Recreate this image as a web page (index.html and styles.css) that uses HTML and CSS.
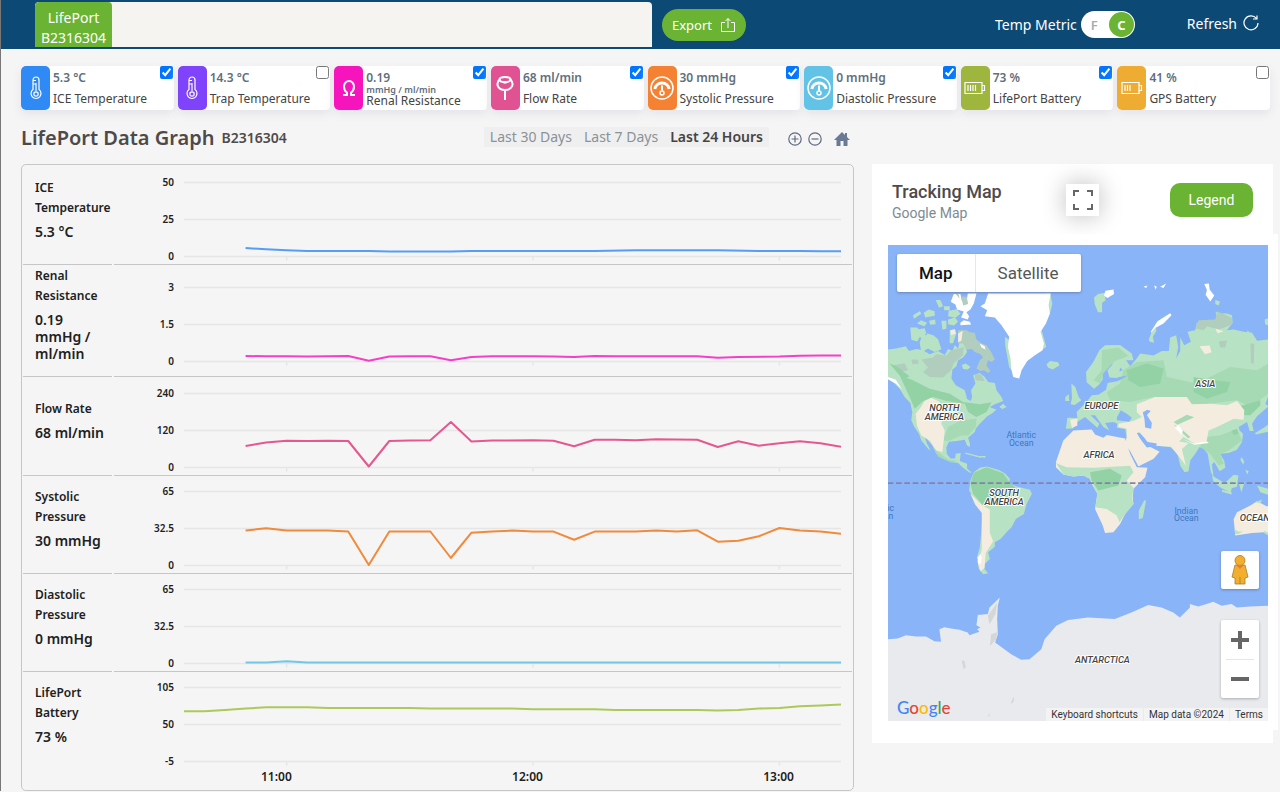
FILE: index.html
```html
<!DOCTYPE html>
<html lang="en">
<head>
<meta charset="utf-8">
<title>LifePort Data Graph</title>
<link rel="stylesheet" href="styles.css">
</head>
<body>
<svg class="defs" width="0" height="0" aria-hidden="true">
  <symbol id="thermo" viewBox="0 0 16 24"><path d="M5 13.500V4a3 3 0 0 1 6 0v9.500a5 5 0 1 1-6 0zM8 7v8M5 4.500h3M5 8h3"/><circle cx="8" cy="18" r="2.200"/></symbol>
  <symbol id="gauge" viewBox="0 0 24 24"><circle cx="12" cy="12" r="11" stroke-width="1.500"/><path d="M4.800 13a7.300 7.300 0 0 1 14.400 0" stroke-width="3"/><path d="M12 9.500v5" stroke-width="2"/><circle cx="12" cy="17" r="2" stroke-width="1.500"/></symbol>
  <symbol id="grid" viewBox="0 0 32 98" preserveAspectRatio="none"><path class="gridline" d="M0 16.500H32M0 53.500H32M0 90.500H32M5 90.500v4M17 90.500v4M29 90.500v4"/></symbol>
</svg>

<header class="topbar">
  <nav class="devices"><a class="device" href="#lifeport">LifePort<br>B2316304</a></nav>
  <button class="export" type="button">Export
    <svg width="16" height="16" viewBox="0 0 16 16" fill="none" stroke="currentColor"><path d="M5 5.500H1.500v9h13v-9H11M8 11V1.500M5.500 4L8 1.500 10.500 4"/></svg>
  </button>
  <div class="metric">
    <span id="metric-label">Temp Metric</span>
    <div class="toggle" role="group" aria-labelledby="metric-label"><button type="button">F</button><button type="button" class="on">C</button></div>
  </div>
  <button class="refresh" type="button">Refresh
    <svg width="16" height="16" viewBox="0 0 16 16" fill="none" stroke="currentColor" stroke-width="1.200"><path d="M13.500 3.500A7 7 0 1 0 15 8M14 .5v3.500h-4"/></svg>
  </button>
</header>

<main class="page">
  <section class="cards" aria-label="Readings">
    <label class="card ice"><span class="badge"><svg width="16" height="24"><use href="#thermo"/></svg></span><span class="info"><b>5.3 °C</b><span>ICE Temperature</span></span><input type="checkbox" checked></label>
    <label class="card trap"><span class="badge"><svg width="16" height="24"><use href="#thermo"/></svg></span><span class="info"><b>14.3 °C</b><span>Trap Temperature</span></span><input type="checkbox"></label>
    <label class="card renal"><span class="badge"><svg width="16" height="18" viewBox="0 0 16 18" class="bold"><path d="M2 16h4v-2.500C3.500 12 3 9.500 3 7.500a5 5.500 0 0 1 10 0c0 2-.5 4.500-3 6V16h4"/></svg></span><span class="info"><b>0.19</b><small>mmHg / ml/min</small><span>Renal Resistance</span></span><input type="checkbox" checked></label>
    <label class="card flow"><span class="badge"><svg width="18" height="26" viewBox="0 0 18 26" class="bold"><path d="M4 4C-1 9 2 15 9 15s10-6 5-11M9 15v10"/><ellipse cx="9" cy="4.500" rx="5.500" ry="2.500"/><path d="M6 7q3 2 6 0" stroke-width="1.500"/></svg></span><span class="info"><b>68 ml/min</b><span>Flow Rate</span></span><input type="checkbox" checked></label>
    <label class="card sys"><span class="badge"><svg width="24" height="24"><use href="#gauge"/></svg></span><span class="info"><b>30 mmHg</b><span>Systolic Pressure</span></span><input type="checkbox" checked></label>
    <label class="card dia"><span class="badge"><svg width="24" height="24"><use href="#gauge"/></svg></span><span class="info"><b>0 mmHg</b><span>Diastolic Pressure</span></span><input type="checkbox" checked></label>
    <label class="card batt"><span class="badge"><svg width="22" height="14" viewBox="0 0 22 14"><path d="M1 1.500h17v11H1zM18 4.500h2.500v5H18M4 4v6M6.500 4v6M9 4v6M11.500 4v6"/></svg></span><span class="info"><b>73 %</b><span>LifePort Battery</span></span><input type="checkbox" checked></label>
    <label class="card gps"><span class="badge"><svg width="22" height="14" viewBox="0 0 22 14"><path d="M1 1.500h17v11H1zM18 4.500h2.500v5H18M4 4v6M6.500 4v6M9 4v6"/></svg></span><span class="info"><b>41 %</b><span>GPS Battery</span></span><input type="checkbox"></label>
  </section>

  <div class="columns">
    <div class="title-row">
      <h1>LifePort Data Graph</h1><h2>B2316304</h2>
      <div class="ranges"><button type="button">Last 30 Days</button><button type="button">Last 7 Days</button><button type="button" class="active">Last 24 Hours</button></div>
      <div class="tools">
        <button type="button" aria-label="Zoom in"><svg width="14" height="14" viewBox="0 0 14 14" fill="none" stroke="currentColor" stroke-width="1.200"><circle cx="7" cy="7" r="6.200"/><path d="M3.500 7h7M7 3.500v7"/></svg></button>
        <button type="button" aria-label="Zoom out"><svg width="14" height="14" viewBox="0 0 14 14" fill="none" stroke="currentColor" stroke-width="1.200"><circle cx="7" cy="7" r="6.200"/><path d="M3.500 7h7"/></svg></button>
        <button type="button" class="home" aria-label="Reset zoom"><svg width="16" height="16" viewBox="0 0 16 16" fill="currentColor"><path d="M8 1L0 9h2.500v6h4v-5h3v5h4V9H16l-3-3V2h-2v2z"/></svg></button>
      </div>
    </div>

    <section class="graph" aria-label="Data graph">
      <div class="row">
        <div class="name"><h3>ICE Temperature</h3><p>5.3 °C</p></div>
        <div class="chart"><div class="yaxis"><span>50</span><span>25</span><span>0</span></div>
          <svg class="plot" viewBox="0 0 32 98" preserveAspectRatio="none"><use href="#grid"/><polyline stroke="#559df8" points="3,82 4,83.300 5,84.300 6,85 9,85 10,85.500 13,85.500 14,85 20,85 22,84.300 26,84.300 28,85 30,85 31,85.300 32,85.300"/></svg></div>
      </div>
      <div class="row tall">
        <div class="name"><h3>Renal Resistance</h3><p>0.19 mmHg / ml/min</p></div>
        <div class="chart"><div class="yaxis"><span>3</span><span>1.5</span><span>0</span></div>
          <svg class="plot" viewBox="0 0 32 98" preserveAspectRatio="none"><use href="#grid"/><polyline stroke="#f63fc8" points="3,85 4,85.300 5,85.300 6,85.600 7,85.300 8,85 9,89.700 10,85.600 11,85.300 12,85.300 13,89.300 14,86 15,85.300 17,85.300 18,85.600 19,86 20,85 21,85.300 25,85.300 26,86.700 27,86 29,85.600 30,84.700 31,84.500 32,84.500"/></svg></div>
      </div>
      <div class="row">
        <div class="name"><h3>Flow Rate</h3><p>68 ml/min</p></div>
        <div class="chart"><div class="yaxis"><span>240</span><span>120</span><span>0</span></div>
          <svg class="plot" viewBox="0 0 32 98" preserveAspectRatio="none"><use href="#grid"/><polyline stroke="#e4588f" points="3,69 4,65.500 5,63.700 6,64 7,63.700 8,64 9,89.500 10,64 11,63.600 12,63.300 13,45 14,64.500 15,63.500 17,63.300 18,63.700 19,69.300 20,62.700 21,62.700 22,63.200 23,62.300 25,62.700 26,70 27,64.300 28,68.700 29,66.300 30,64.300 31,66.300 32,69.700"/></svg></div>
      </div>
      <div class="row">
        <div class="name"><h3>Systolic Pressure</h3><p>30 mmHg</p></div>
        <div class="chart"><div class="yaxis"><span>65</span><span>32.5</span><span>0</span></div>
          <svg class="plot" viewBox="0 0 32 98" preserveAspectRatio="none"><use href="#grid"/><polyline stroke="#f08a3c" points="3,55.500 4,53.300 5,55.500 7,55.500 8,56.500 9,90 10,56.500 12,56.500 13,83 14,57.700 15,56.600 16,55.600 17,56.600 18,56.600 19,64.700 20,56.600 22,56.600 23,55.600 24,56.500 25,55.300 26,66.700 27,65.700 28,61.300 29,53 30,55.600 31,56.600 32,58.700"/></svg></div>
      </div>
      <div class="row">
        <div class="name"><h3>Diastolic Pressure</h3><p>0 mmHg</p></div>
        <div class="chart"><div class="yaxis"><span>65</span><span>32.5</span><span>0</span></div>
          <svg class="plot" viewBox="0 0 32 98" preserveAspectRatio="none"><use href="#grid"/><polyline stroke="#73c7e6" points="3,89.500 4,89.500 5,88.200 6,89.500 32,89.500"/></svg></div>
      </div>
      <div class="row last">
        <div class="name"><h3>LifePort Battery</h3><p>73 %</p></div>
        <div class="chart"><div class="yaxis"><span>105</span><span>50</span><span>-5</span></div>
          <svg class="plot" viewBox="0 0 32 98" preserveAspectRatio="none"><use href="#grid"/><polyline stroke="#adc95b" points="0,40.300 1,40.300 2,39 3,37.500 4,36.300 6,36.300 7,37 11,37 12,37.500 16,37.500 17,38.200 20,38.200 21,38.900 25,38.900 26,39.500 27,38.900 28,37.500 29,37 30,35.300 31,34.500 32,33.500"/></svg></div>
        <div class="xaxis"><span>11:00</span><span>12:00</span><span>13:00</span></div>
      </div>
    </section>

    <section class="tracking">
      <div class="tracking-head">
        <div class="heading"><h2>Tracking Map</h2><p>Google Map</p></div>
        <button type="button" class="expand" aria-label="Full screen"><svg width="20" height="20" viewBox="0 0 20 20" fill="none" stroke="#666" stroke-width="2"><path d="M1 6V1h5M14 1h5v5M19 14v5h-5M6 19H1v-5"/></svg></button>
        <button type="button" class="legend">Legend</button>
      </div>
      <div class="map-frame"><div class="map">
        <svg class="world" viewBox="0 0 1140 1425" preserveAspectRatio="xMidYMid slice" aria-label="World map">
          <g transform="translate(-24 105)">
            <path class="land" d="M24 208L50 205 78 198 88 212 110 206 130 210 150 222 175 212 195 224 205 206 218 212 225 195 235 205 240 185 254 190 262 215 250 232 235 240 230 258 218 268 215 295 228 315 255 330 262 356 273 362 277 350 274 330 287 310 280 285 300 278 315 290 325 305 345 308 350 330 365 350 370 362 345 372 330 380 350 388 335 400 322 408 312 418 298 432 288 445 285 455 265 472 271 492 269 500 262 495 255 478 230 482 208 484 200 500 201 520 212 534 226 534 228 520 243 518 240 542 262 550 262 565 275 575 285 572 270 577 250 562 235 548 215 545 190 535 170 520 158 495 135 468 142 490 153 510 146 506 125 480 118 460 104 440 95 420 98 395 92 368 75 350 60 325 45 310 24 295z"/>
            <path class="tundra" d="M125 238L160 232 170 222 200 226 215 210 252 200 250 225 222 248 214 270 190 292 150 290 130 275 145 262zM40 255L75 250 85 270 60 275zM95 238l20 0 2 12-18 2zM285 282l18 0 12 20-28-2z"/>
            <path class="forest" d="M60 285L100 300 150 325 210 340 250 365 300 372 335 366 320 395 290 410 265 395 255 370 200 362 160 350 130 362 105 385 90 350zM30 250l20 8 40 30-20 10z"/>
            <path class="mid" d="M205 440L245 420 290 415 288 440 265 465 245 465 205 482 190 480zM160 500l15 15 30 22 30 5-20 4-40-18z"/>
            <path class="sand" d="M135 362L155 352 180 365 195 385 185 430 195 450 192 480 188 515 170 510 150 480 125 465 112 435 108 400 120 385z"/>
            <path class="land" d="M92 142l20 0 5 5 18-3 5 16-15 12-6 0-6 12-18-5zM120 188l8-25 12 2 3-5 18 5 14 12 10 30-20 8-20-10-20 12zM100 105l20-12 5 8-22 15zM112 130l12-10 18 8-8 10zM132 98l15-10 18 5 0 14-28 5zM148 122l18-4 2 14-16 2zM168 60l14 0 8 18-12 5zM192 78l18 0 0 12-16 0zM185 122l15 0 0 24-12 2zM205 118l20-6 10 12-12 12-18-4zM210 150l15-3 5 12-10 30-10 0zM207 92l25-5 10 14-15 12-22-5zM246 254l12-4 14 10-8 8-14-2zM358 380l12-10 10 10-12 6zM256 516l50 13-2 4-48-13zM300 527l18 0-4 6z"/>
            <path class="tundra" d="M235 190L235 150 260 150 270 156 285 158 290 178 306 190 320 195 334 215 345 238 335 245 325 240 320 256 332 272 325 278 312 270 302 272 290 265 300 240 310 232 302 222 285 215 276 206 260 208 250 190z"/>
            <path class="sand" d="M212 150l14-3 2 14-14 4zM235 160l14-8-4 30-10 4z"/>
            <path class="ice" d="M222 42l20 0 4 20 14 8 4-30 26 0-8 30-10 18-12 8 8 12-4 10-20-6 8-18-20-6-5-15-14-8zM242 128l10-8 18 5 4 8-32 2zM300 190l15 8 2 10-12-6zM24 290l24 8 20 30-20-18-24-14z"/>
            <path class="tundra" d="M245 50l16 0 4 22-15 4zM228 42l8 0 4 14z"/>
            <path class="land" d="M375 170l14 10 14 100-15-20-12-65zM485 150l28-60 4-20-6-30-12 0-20 130 8 38 12-8zM500 252l10-10 25 4 3 10-20 12-14-6z"/>
            <path class="ice" d="M302 78L315 70 325 40 512 40 506 75 510 100 498 130 482 155 492 190 488 210 465 225 442 242 425 270 418 295 400 290 394 265 392 235 384 200 388 170 365 135 345 112 315 108 322 90z"/>
            <path class="land" d="M272 600L282 575 300 562 320 558 355 568 375 578 390 595 388 608 410 618 450 628 456 640 440 670 432 700 408 715 395 740 380 755 362 775 345 785 345 798 325 815 330 835 315 850 314 865 325 878 310 881 297 865 292 830 300 800 304 760 308 700 308 688 290 668 268 630z"/>
            <path class="forest" d="M282 577L320 560 370 578 385 600 410 625 395 660 350 670 310 675 280 640 272 610z"/>
            <path class="sand" d="M272 640l36 35 22 12 0 70 10 25-22 35-4 45-12 10-8-25 12-40 0-110-20-25z"/>
            <path class="ice" d="M294 830l8-10 4 10-4 20-8-4z"/>
          </g>
          <g transform="translate(546 105)">
            <path class="land" d="M-12 445L-8 412 22 413 20 395 35 380 50 365 65 345 85 343 108 328 113 308 145 302 150 294 118 292 112 270 128 252 118 250 98 275 98 298 88 312 72 325 50 306 48 275 70 245 88 210 105 195 150 194 185 220 190 240 168 240 180 258 200 235 210 220 250 226 275 212 296 212 300 172 318 165 324 200 318 235 330 212 330 172 342 195 362 185 352 155 375 150 380 128 440 120 436 95 450 100 470 100 485 105 487 128 470 150 490 148 520 155 545 158 560 182 594 178V345L585 370 594 378 560 408 545 430 550 452 538 452 530 425 505 440 508 450 518 460 515 485 500 508 475 518 450 520 462 542 465 562 448 572 432 545 425 552 430 590 422 575 412 520 400 505 388 500 375 520 360 540 355 572 343 575 330 555 322 520 300 500 250 495 228 478 240 500 268 514 250 535 205 557 180 512 165 490 170 470 165 446 140 442 142 430 130 425 105 428 118 450 100 440 75 405 62 405 88 430 82 442 45 410 22 425 8 444z"/>
            <path class="mid" d="M110 335L150 310 160 270 200 245 280 240 290 290 380 310 480 260 560 270 594 250V340L540 380 500 360 380 375 250 350 180 365 120 360zM95 210l50-8 30 25-40 15-15 15-20 22-10 30-20-8 25-30zM400 470l50-5 50-20 15 35-40 30-25 10 10 30-15 5-25-35-30-20z"/>
            <path class="forest" d="M170 270l60-20 50 15-10 45-60 10-35-20zM370 290l60 10 50 5-10 30-60 20-40-20zM500 380l70-20 0 15-30 30-25 0zM485 450l15-4 4 14-15 4z"/>
            <path class="tundra" d="M375 145l10-25 50-2 5-25 45 20 0 20-40 15-35-10-10 12zM445 185l25-5-5 22-15 0zM540 190l12 0-2 60-8 0z"/>
            <path class="sand" d="M200 372L255 350 350 350 365 372 420 370 470 375 500 362 522 390 520 418 490 415 440 440 415 450 408 488 370 488 340 470 310 500 250 495 225 480 240 500 268 514 250 535 205 557 180 512 165 490 170 470 170 445 145 440 145 430 190 422 215 410 200 395zM388 198l30-2 6 20-20 6zM0 418l22-3 0 20-16 8zM300 495l25-12 30 5-20 18 12 50-15-20zM435 145l25 8-18 6z"/>
            <path class="mid" d="M310 425l40-22 22 8-50 22zM310 432l20 10 30 28-6 4z"/>
            <path class="ice" d="M314 442l10-8 14 16 -4 14-6-8zM338 476l32 13 40-6 6 5-44 5z"/>
            <path class="sea" d="M140 412l12-22 18 10 15 12-8 12-36-4zM218 396l14-8 10 4-12 12 15 23-2 18-18-4-2-24zM200 458l8-2 14 15 10 14 28 4-2 8-28 4-20-26zM118 300l30-10 25-4-10 6-15 8zM150 262l8 8-10 4z"/>
            <path class="sand" d="M-42 545L-20 480 10 450 65 447 75 462 100 472 110 464 165 474 180 520 200 560 232 562 225 590 190 625 188 655 190 670 165 700 150 730 130 755 105 757 98 735 75 685 82 640 65 610 60 595 40 585 10 588-20 582-42 560z"/>
            <path class="land" d="M-42 548L-10 560 70 562 180 556 190 575 170 600 190 622 186 655 190 670 165 700 148 725 140 705 110 685 76 680 82 640 60 595 40 585 10 588-20 582z"/>
            <path class="forest" d="M60 575l60-10 35 20-10 30-60 15-20-30z"/>
            <path class="ice" d="M242 155l20-32 38-24 4 6-24 25-22 12-10 18z"/>
            <path class="land" d="M236 178l8-22 14-16 0 14-10 16 4 18-14-4zM4 310l12 10 10 30 8 10-20 14-12-2 4-20zM-14 350l10-8 2 20-12 0zM72 52l12-10 22-4 0 24-10 6 0 28-12 0-10-24zM435 60l14 4-4 12-10-4zM583 118l11-4v22l-10-4zM530 150l8 6-6 6zM514 530l8 14-4 8-8-14zM554 458l26-16 14-10v22l-38 8zM425 585l25 15 35 20-4 16-30-14-22-20zM466 605l24-22 14 2-4 34-22 6zM505 605l18 0-10 30zM525 568l10 4-4 10zM560 615l34 10v18l-24-8zM455 628l30 8-2 6-28-8zM206 690l16-30 6 0-10 52-12 4z"/>
            <path class="ice" d="M106 32l24-4 2 14-20 12-10-8zM220 20l12-4-4 8zM252 16l8 4-4 8zM270 20l18-10-8 14zM402 12l14-2 2 18 14 18-12 18-14-20 4-14z"/>
            <path class="sand" d="M490 715L500 695 540 675 560 662 590 678 600 670V766L580 755 545 757 495 765z"/>
            <path class="land" d="M492 745l12 8 14 0-16 8-8-2zM555 665l20-8-5 12zM580 750l20 10v8l-18-10z"/>
          </g>
          <path class="antarctica" d="M0 1180L30 1178 55 1168 85 1172 115 1172 140 1186 160 1188 155 1150 170 1144 190 1148 215 1152 240 1160 245 1168 275 1158 268 1150 278 1145 266 1138 270 1108 300 1105 305 1085 336 1055 330 1080 328 1120 330 1165 322 1190 370 1225 400 1242 425 1240 460 1210 470 1180 505 1140 540 1123 600 1115 680 1120 730 1100 780 1078 820 1085 855 1100 875 1115 905 1085 905 1075 930 1082 955 1075 975 1068 1000 1080 1030 1075 1045 1085 1085 1082 1140 1080V1425H0z"/>
          <path class="shade" d="M300 1110l28-40-5 35-18 30zM310 1165l18-6-4 22-18 20zM222 1245l8 0 4 18-6 8zM370 1368l8-16 0 14-8 8zM300 1410l6-8-2 10z"/>
          <path class="equator" d="M0 713H1140"/>
          <g class="region">
            <text x="170" y="496">NORTH</text><text x="170" y="525">AMERICA</text>
            <text x="349" y="750">SOUTH</text><text x="349" y="777">AMERICA</text>
            <text x="640" y="490">EUROPE</text><text x="951" y="426">ASIA</text>
            <text x="633" y="639">AFRICA</text><text x="643" y="1250">ANTARCTICA</text>
            <text x="1112" y="826">OCEANIA</text>
          </g>
          <g class="ocean">
            <text x="400" y="579">Atlantic</text><text x="400" y="602">Ocean</text>
            <text x="894" y="804">Indian</text><text x="894" y="827">Ocean</text>
            <text x="-20" y="796">Pacific</text><text x="-20" y="819">Ocean</text>
          </g>
        </svg>
        <div class="maptype"><button type="button" class="on">Map</button><button type="button">Satellite</button></div>
        <div class="map-controls">
          <button type="button" class="pegman" aria-label="Street View"><svg width="20" height="32" viewBox="0 0 20 32" fill="#f2ae2e" stroke="#a87b28" stroke-width=".8"><path d="M5 11h10l3 12-3 1v6H5v-6l-3-1z"/><path d="M10 23v7"/><circle cx="10" cy="6.500" r="5"/><path d="M6 11l4 4 4-4z" fill="#ee7b30" stroke="none"/></svg></button>
          <div class="zoom"><button type="button" aria-label="Zoom map in"><svg width="18" height="18" stroke="#666" stroke-width="4"><path d="M0 9h18M9 0v18"/></svg></button><button type="button" aria-label="Zoom map out"><svg width="18" height="18" stroke="#666" stroke-width="4"><path d="M0 9h18"/></svg></button></div>
        </div>
        <div class="google" aria-label="Google"><span class="b">G</span><span class="r">o</span><span class="y">o</span><span class="b">g</span><span class="g">l</span><span class="r">e</span></div>
        <div class="credits"><button type="button">Keyboard shortcuts</button><span>Map data ©2024</span><a href="#terms">Terms</a></div>
      </div></div>
    </section>
  </div>
</main>
</body>
</html>
```
FILE: styles.css
```css
* { box-sizing: border-box; }
body { margin: 0; background: #f5f5f5; color: #212121; font-family: "Noto Sans", sans-serif; border-left: 1px solid #777; overflow-x: hidden; }
h1, h2, h3, p { margin: 0; }
button { font: inherit; color: inherit; border: 0; padding: 0; background: none; cursor: pointer; }
svg { display: block; }
.defs { position: absolute; }

.topbar { display: flex; align-items: center; height: 49px; padding: 0 21px 0 34px; background: #0c4a75; color: #fff; font-size: 14px; }
.devices { flex: 0 1 617px; height: 45px; background: #f5f4f1; border-radius: 4px 4px 0 0; overflow: hidden; }
.device { display: block; width: 77px; height: 45px; padding-top: 6px; background: #6bb333; color: #fff; font-size: 14px; line-height: 20px; text-align: center; text-decoration: none; border-radius: 4px 4px 0 0; }
.export { display: flex; align-items: center; justify-content: center; gap: 8px; width: 84px; height: 32px; margin-left: 10px; background: #6bb333; border-radius: 16px; font-size: 13px; }
.metric { display: flex; align-items: center; gap: 4px; margin-left: auto; font-size: 14px; }
.toggle { display: flex; align-items: center; justify-content: space-between; width: 54px; height: 27px; padding: 1px; background: #fff; border-radius: 14px; }
.toggle button { width: 25px; height: 25px; border-radius: 50%; color: #aaa; font-weight: 600; font-size: 13px; }
.toggle .on { background: #6bb333; color: #fff; font-weight: 700; }
.refresh { display: flex; align-items: center; gap: 6px; margin-left: 52px; padding-bottom: 3px; font-size: 14px; }

.page { padding: 17px 7px 0 20px; }
.cards { display: grid; grid-template-columns: repeat(8, minmax(0, 1fr)); gap: 4px; padding-right: 3px; }
.card { position: relative; display: flex; height: 44px; background: #fff; border-radius: 4px; box-shadow: 0 4px 10px #e4e4ea; }
.badge { display: grid; place-items: center; flex: none; width: 29px; border-radius: 5px; }
.badge svg { fill: none; stroke: #fff; stroke-width: 1.2; }
.badge .bold { stroke-width: 2; }
.ice .badge { background: #2f8af5; }
.trap .badge { background: #7e43fb; }
.renal .badge { background: #f615bd; }
.flow .badge { background: #e15292; }
.sys .badge { background: #f58233; }
.dia .badge { background: #62c3e6; }
.batt .badge { background: #9eb53e; }
.gps .badge { background: #eeac33; }
.info { display: flex; flex-direction: column; justify-content: space-between; padding: 4px 0 3px 3px; color: #444; font-size: 12px; line-height: 16px; white-space: nowrap; }
.info b { color: #5f6f7d; font-size: 12px; font-weight: 600; }
.info small { color: #5f6f7d; font-size: 9px; line-height: 7px; font-weight: 600; }
.card input { position: absolute; top: 0; right: 1px; width: 13px; height: 13px; margin: 0; }
.renal .info { padding-bottom: 1px; }
.renal .info b { line-height: 15px; }

.columns { display: grid; grid-template-columns: minmax(0, 833fr) minmax(0, 401fr); column-gap: 18px; }
.title-row { grid-column: 1; display: flex; align-items: center; height: 54px; }
.title-row h1 { color: #4f4a4a; font-size: 20px; font-weight: 600; }
.title-row h2 { margin-left: 7px; color: #4f4a4a; font-size: 14px; font-weight: 600; }
.ranges { display: flex; gap: 12px; margin-left: auto; padding: 0 6px; background: #efefef; color: #8a9298; font-size: 14px; line-height: 20px; }
.ranges .active { color: #444; font-weight: 600; }
.tools { display: flex; align-items: center; gap: 6px; margin: 4px 4px 0 19px; color: #5f6b80; }
.tools .home { margin-left: 6px; color: #6b7a94; }

.graph { grid-column: 1; align-self: start; padding: 1px; border: 1px solid #c6c6c6; border-radius: 5px; }
.row { display: grid; grid-template-columns: 89px minmax(0, 1fr); column-gap: 2px; height: 98px; }
.row.tall { height: 113px; }
.row.last { height: 118px; grid-template-rows: 98px 20px; }
.name, .chart { display: flex; border-bottom: 1px solid #c6c6c6; }
.last .name, .last .chart { border: 0; }
.name { flex-direction: column; justify-content: center; padding: 0 0 12px 12px; }
.name h3 { font-size: 12px; line-height: 20px; font-weight: 600; }
.name p { margin-top: 5px; padding-right: 4px; font-size: 14px; line-height: 17px; font-weight: 600; }
.chart { align-items: center; padding-right: 11px; }
.yaxis { display: flex; flex-direction: column; justify-content: space-between; flex: none; width: 60px; height: 90px; margin-top: 8px; text-align: right; font-size: 10px; line-height: 16px; font-weight: 600; }
.plot { flex: 1; min-width: 0; height: 98px; margin-left: 10px; }
.plot polyline { fill: none; stroke-width: 2; stroke-linejoin: round; vector-effect: non-scaling-stroke; }
.gridline { stroke: #e6e6e6; stroke-width: 1.5; fill: none; vector-effect: non-scaling-stroke; }
.xaxis { grid-column: 2; display: flex; justify-content: space-between; padding: 0 58px 0 147px; font-size: 12px; line-height: 16px; font-weight: 600; }

.tracking { grid-column: 2; align-self: start; padding: 0 0 13px; background: #fff; font-family: Roboto, sans-serif; }
.tracking-head { display: flex; align-items: center; height: 70px; padding: 2px 20px 0; }
.heading { flex: 1; padding-top: 4px; }
.tracking h2 { color: #4f4a4a; font-size: 18px; font-weight: 500; line-height: 22px; }
.heading p { color: #7c8b95; font-size: 14px; line-height: 20px; }
.expand { display: grid; place-items: center; width: 33px; height: 32px; margin-right: 71px; background: #fff; box-shadow: 0 0 24px #bbb; }
.legend { width: 83px; height: 34px; background: #6bb333; color: #fff; border-radius: 10px; font-size: 14px; }
.map-frame { position: relative; margin-right: -5px; padding: 11px 10px 9px 16px; background: #fff; }
.map { position: relative; height: 476px; overflow: hidden; background: #8ab4f8; }
.world { width: 100%; height: 100%; }
.sea { fill: #8ab4f8; }
.land { fill: #b8e2c4; }
.mid { fill: #a5dab5; }
.forest { fill: #92d2a5; }
.tundra { fill: #b0cdbd; }
.sand { fill: #f4eddf; }
.ice { fill: #fff; }
.antarctica { fill: #e8eaed; }
.shade { fill: #d5d6d8; }
.equator { stroke: #8383ad; stroke-width: 5; stroke-dasharray: 17 8; }
.region, .ocean { text-anchor: middle; font-weight: 500; }
.region { font-size: 28px; font-style: italic; fill: #444; stroke: #fff; stroke-width: 6px; stroke-linejoin: round; paint-order: stroke; }
.ocean { font-size: 26px; fill: #3b78bd; font-weight: 400; }
.maptype { position: absolute; top: 9px; left: 9px; display: flex; background: #fff; border-radius: 2px; box-shadow: 0 1px 3px #0004; font-size: 17px; color: #565656; }
.maptype button { height: 38px; padding: 0 22px; }
.maptype .on { color: #111; font-weight: 500; border-right: 1px solid #e6e6e6; }
.map-controls { position: absolute; right: 9px; bottom: 23px; display: grid; gap: 31px; }
.map-controls > * { width: 38px; background: #fff; border-radius: 2px; box-shadow: 0 1px 3px #0004; }
.pegman { display: grid; place-items: center; height: 38px; }
.zoom { display: grid; padding: 0 5px; }
.zoom button { display: grid; place-items: center; height: 39px; }
.zoom button + button { border-top: 1px solid #e6e6e6; }
.google { position: absolute; left: 9px; bottom: 1px; font: 500 17px/24px Lato, sans-serif; }
.google .b { color: #4285f4; }
.google .r { color: #ea4335; }
.google .y { color: #fbbc05; }
.google .g { color: #34a853; }
.credits { position: absolute; right: 0; bottom: 0; display: flex; gap: 1px; font-size: 10px; line-height: 13px; color: #333; }
.credits > * { padding: 0 5px; background: #f3f3f4; color: #333; text-decoration: none; }
```
